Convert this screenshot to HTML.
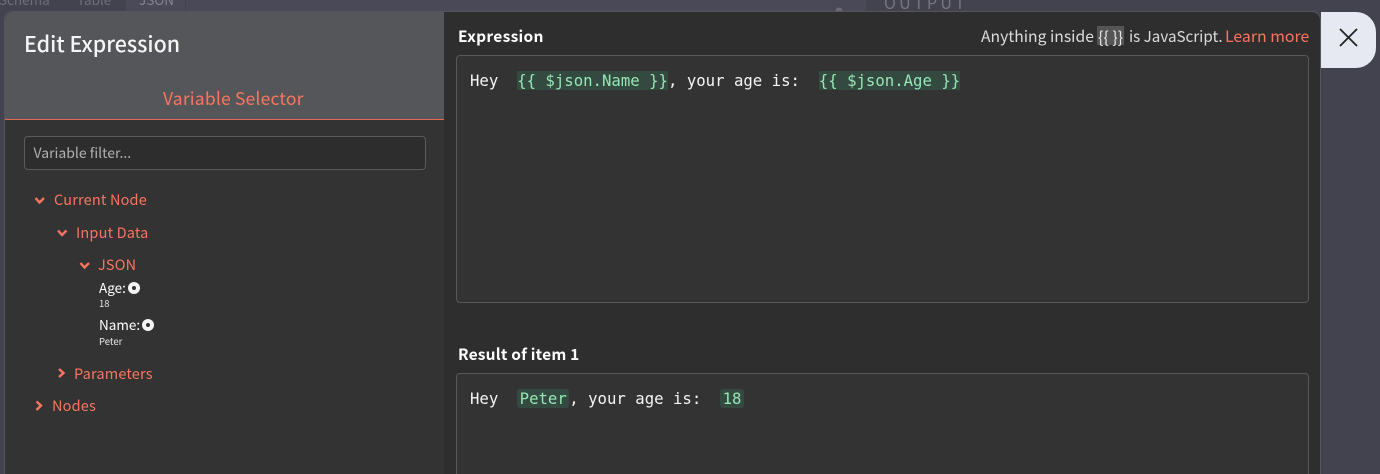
<!DOCTYPE html>
<html><head><meta charset="utf-8">
<style>
html,body{margin:0;padding:0;width:1380px;height:474px;overflow:hidden;background:#43424f}
body{position:relative;font-family:"Noto Sans CJK JP","Liberation Sans",sans-serif}
.a{position:absolute;white-space:nowrap}
.t{position:absolute;white-space:nowrap;line-height:20px}
.o{color:#fb7460}
.m{font-family:"DejaVu Sans Mono","Liberation Mono",monospace;font-size:15.67px;color:#f5f5f5;line-height:20px;white-space:pre}
.h{background:#34493f;color:#96e6b6}
.r{background:#34493f;color:#96e6b6;padding:0 2.5px;border-radius:3px}
</style></head><body>
<div class="t" style="left:-1px;top:-11px;font-size:13.5px;color:#6e6d7a">Schema</div>
<div class="t" style="left:77px;top:-11px;font-size:13.5px;color:#6e6d7a">Table</div>
<div class="a" style="left:126px;top:0;width:59px;height:12px;background:#4b4a59"></div>
<div class="t" style="left:139px;top:-11px;font-size:13.5px;color:#85848f">JSON</div>
<div class="a" style="left:186px;top:0;width:5px;height:12px;background:#4a4957"></div>
<div class="a" style="left:866px;top:0;width:514px;height:12px;background:#43424f"></div>
<div class="a" style="left:191px;top:0;width:675px;height:12px;background:#4a4957"></div>
<div class="t" style="left:884px;top:-8px;font-size:16px;color:#77767f;letter-spacing:3.3px">OUTPUT</div>
<div class="a" style="left:832px;top:6px;width:14px;height:6px;background:#6c6b75;clip-path:polygon(20% 100%,35% 30%,65% 30%,80% 100%)"></div>

<div class="a" style="left:5px;top:12px;width:1315px;height:470px;background:#2e2e2e;border-radius:8px 8px 0 0;overflow:hidden;box-shadow:0 0 0 1px #55555d">
  <div class="a" style="left:0;top:0;width:439px;height:470px;background:#333"></div>
  <div class="a" style="left:0;top:0;width:439px;height:107px;background:#555659"></div>
  <div class="a" style="left:0;top:107px;width:439px;height:1.2px;background:#e56a52"></div>
</div>

<div class="t" style="left:24px;top:32px;font-size:21.4px;line-height:24px;color:#f5f5f5;font-weight:500">Edit Expression</div>
<div class="t o" style="left:163px;top:89px;font-size:17.5px;letter-spacing:.18px">Variable Selector</div>

<div class="a" style="left:24px;top:136px;width:400px;height:32px;background:#2d2d2d;border:1px solid #5b5b5b;border-radius:4px"></div>
<div class="t" style="left:33.5px;top:143px;font-size:14px;color:#b0b0b0">Variable filter...</div>

<svg class="a" style="left:0;top:0" width="444" height="474" fill="none" stroke="#fb7460" stroke-width="2.4">
<path d="M35.500 198 L39.500 202.500 L44 198"/>
<path d="M58 230.500 L62 235 L66.500 230.500"/>
<path d="M80.500 263 L84.500 267.500 L89 263"/>
<path d="M59 369 L63.500 373 L59 377"/>
<path d="M36.500 401.500 L41 405.500 L36.500 410"/>
</svg>
<div class="t o" style="left:54px;top:190px;font-size:14.5px;letter-spacing:.17px">Current Node</div>
<div class="t o" style="left:76px;top:223px;font-size:14.5px;letter-spacing:.17px">Input Data</div>
<div class="t o" style="left:98px;top:255px;font-size:14.5px;letter-spacing:.17px">JSON</div>
<div class="t" style="left:99px;top:277px;font-size:13.5px;color:#fff">Age:</div>
<div class="t" style="left:99px;top:293px;font-size:9.5px;color:#e8e8e8">18</div>
<div class="t" style="left:99px;top:314px;font-size:13.5px;color:#fff">Name:</div>
<div class="t" style="left:99px;top:331px;font-size:9.5px;color:#e8e8e8">Peter</div>
<svg class="a" style="left:0;top:0" width="444" height="474">
<circle cx="134" cy="288" r="6" fill="#f5f5f5"/><circle cx="134" cy="288" r="2" fill="#333"/>
<circle cx="148" cy="325" r="6" fill="#f5f5f5"/><circle cx="148" cy="325" r="2" fill="#333"/>
</svg>
<div class="t o" style="left:74px;top:363.500px;font-size:14.5px;letter-spacing:.17px">Parameters</div>
<div class="t o" style="left:52px;top:396px;font-size:14.5px;letter-spacing:.17px">Nodes</div>

<div class="t" style="left:458px;top:26px;font-size:15.5px;letter-spacing:.3px;color:#fff;font-weight:700">Expression</div>
<div class="t" style="left:981px;top:26px;font-size:15.7px;color:#dcdcdc">Anything inside</div>
<div class="t" style="left:1097px;top:26px;height:19px;font-size:16px;color:#e8e8e8;background:#555;padding:0 1px">{{ }}</div>
<div class="t" style="left:1129px;top:26px;font-size:15.2px;color:#dcdcdc">is JavaScript.</div>
<div class="t o" style="left:1225px;top:26px;font-size:15.85px">Learn more</div>

<div class="a" style="left:456px;top:55px;width:851px;height:246px;background:#333;border:1px solid #585858;border-radius:4px"></div>
<div class="a m" style="left:470px;top:71px">Hey  <span class="h">{{ $json.Name }}</span>, your age is:  <span class="h">{{ $json.Age }}</span></div>

<div class="t" style="left:458px;top:344px;font-size:15.5px;letter-spacing:.2px;color:#fff;font-weight:700">Result of item 1</div>
<div class="a" style="left:456px;top:373px;width:851px;height:120px;background:#333;border:1px solid #585858;border-radius:4px"></div>
<div class="a m" style="left:470px;top:389px">Hey  <span class="r">Peter</span>, your age is:  <span class="r">18</span></div>

<div class="a" style="left:1321px;top:12px;width:55px;height:56px;background:#e6e9f2;border-radius:0 20px 20px 0"></div>
<svg class="a" style="left:1338px;top:27px" width="22" height="22" fill="none" stroke="#222" stroke-width="1.8"><path d="M2 2 L19 19 M19 2 L2 19"/></svg>
</body></html>
